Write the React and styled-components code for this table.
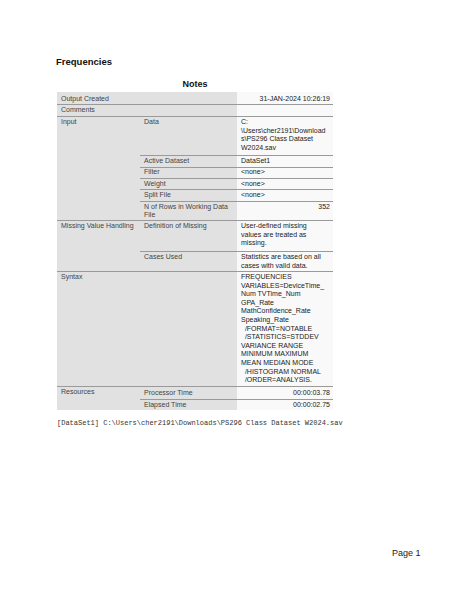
import React from "react";
import styled, { createGlobalStyle } from "styled-components";

const GlobalStyle = createGlobalStyle`
    html, body {
        margin:0;
        padding:0;
        background:#fff;
    }
    body{
        font-family:"Liberation Sans", Arial, sans-serif;
        color:#222;
    }
`;

const Page = styled.div`
    width:474px;
    height:613px;
    box-sizing:border-box;
    padding:56px 0 0 56px;
    display:flex;
    flex-direction:column;
`;

const Heading = styled.h1`
    margin:0;
    font-size:9.5px;
    font-weight:bold;
    color:#111;
    line-height:12px;
`;

const Output = styled.div`
    width:276px;
    margin-left:1px;
    margin-top:10px;
    display:flex;
    flex-direction:column;
`;

const Caption = styled.div`
    text-align:center;
    font-size:9px;
    font-weight:bold;
    color:#111;
    line-height:12px;
    margin-bottom:2px;
`;

const Table = styled.table`
    border-collapse:collapse;
    width:276px;
    table-layout:fixed;
    font-size:7px;
    line-height:8.6px;
    color:#333;
`;

const Cell = styled.td`
    vertical-align:top;
    padding:${p => p.$pt ?? 0.9}px 3px ${p => p.$pb ?? 0.9}px 4px;
    background:${p => p.$value ? "#f9f9f9" : "#e1e1e1"};
    text-align:${p => p.$right ? "right" : "left"};
    border-bottom:${p => p.$noLine ? "none" : "1px solid #9a9a9a"};
    color:${p => p.$value ? "#222" : "#444"};
    word-break:break-all;
`;

const Log = styled.div`
    margin-top:9px;
    margin-left:1px;
    font-family:"Liberation Mono", "Courier New", monospace;
    font-size:7px;
    color:#333;
    white-space:pre;
`;

const Footer = styled.div`
    margin-top:auto;
    margin-bottom:55px;
    margin-left:336px;
    font-size:9px;
    color:#222;
`;

const syntax = [
    "FREQUENCIES",
    "VARIABLES=DeviceTime_",
    "Num TVTime_Num",
    "GPA_Rate",
    "MathConfidence_Rate",
    "Speaking_Rate",
    "  /FORMAT=NOTABLE",
    "  /STATISTICS=STDDEV",
    "VARIANCE RANGE",
    "MINIMUM MAXIMUM",
    "MEAN MEDIAN MODE",
    "  /HISTOGRAM NORMAL",
    "  /ORDER=ANALYSIS.",
];

function Lines({lines}){
    return lines.map((l, i) => <div key={i} style={{whiteSpace:"pre"}}>{l}</div>);
}

export default function App(){
    return(
        <Page>
            <GlobalStyle/>
            <Heading>Frequencies</Heading>
            <Output>
                <Caption>Notes</Caption>
                <Table>
                    <colgroup>
                        <col style={{width:83}}/>
                        <col style={{width:97}}/>
                        <col style={{width:96}}/>
                    </colgroup>
                    <tbody>
                        <tr>
                            <Cell colSpan={2} $pt={2.8} $pb={0.8}>Output Created</Cell>
                            <Cell $value $right $pt={2.8} $pb={0.8}>31-JAN-2024 10:26:19</Cell>
                        </tr>
                        <tr>
                            <Cell colSpan={2} $pt={1.3} $pb={1.1}>Comments</Cell>
                            <Cell $value $pt={1.3} $pb={1.1}></Cell>
                        </tr>
                        <tr>
                            <Cell rowSpan={6}>Input</Cell>
                            <Cell>Data</Cell>
                            <Cell $value $pb={2.7}>
                                <Lines lines={["C:", "\\Users\\cher2191\\Download", "s\\PS296 Class Dataset", "W2024.sav"]}/>
                            </Cell>
                        </tr>
                        <tr>
                            <Cell>Active Dataset</Cell>
                            <Cell $value>DataSet1</Cell>
                        </tr>
                        <tr>
                            <Cell>Filter</Cell>
                            <Cell $value>&lt;none&gt;</Cell>
                        </tr>
                        <tr>
                            <Cell>Weight</Cell>
                            <Cell $value>&lt;none&gt;</Cell>
                        </tr>
                        <tr>
                            <Cell>Split File</Cell>
                            <Cell $value>&lt;none&gt;</Cell>
                        </tr>
                        <tr>
                            <Cell $pb={0.4}><Lines lines={["N of Rows in Working Data", "File"]}/></Cell>
                            <Cell $value $right>352</Cell>
                        </tr>
                        <tr>
                            <Cell rowSpan={2}>Missing Value Handling</Cell>
                            <Cell>Definition of Missing</Cell>
                            <Cell $value $pb={3.3}>
                                <Lines lines={["User-defined missing", "values are treated as", "missing."]}/>
                            </Cell>
                        </tr>
                        <tr>
                            <Cell>Cases Used</Cell>
                            <Cell $value $pb={1}>
                                <Lines lines={["Statistics are based on all", "cases with valid data."]}/>
                            </Cell>
                        </tr>
                        <tr>
                            <Cell colSpan={2}>Syntax</Cell>
                            <Cell $value $pb={1.3}><Lines lines={syntax}/></Cell>
                        </tr>
                        <tr>
                            <Cell rowSpan={2} $noLine>Resources</Cell>
                            <Cell $pt={1.8} $pb={1.6}>Processor Time</Cell>
                            <Cell $value $right $pt={1.8} $pb={1.6}>00:00:03.78</Cell>
                        </tr>
                        <tr>
                            <Cell $noLine>Elapsed Time</Cell>
                            <Cell $value $right $noLine>00:00:02.75</Cell>
                        </tr>
                    </tbody>
                </Table>
            </Output>
            <Log>[DataSet1] C:\Users\cher2191\Downloads\PS296 Class Dataset W2024.sav</Log>
            <Footer>Page 1</Footer>
        </Page>
    );
}
